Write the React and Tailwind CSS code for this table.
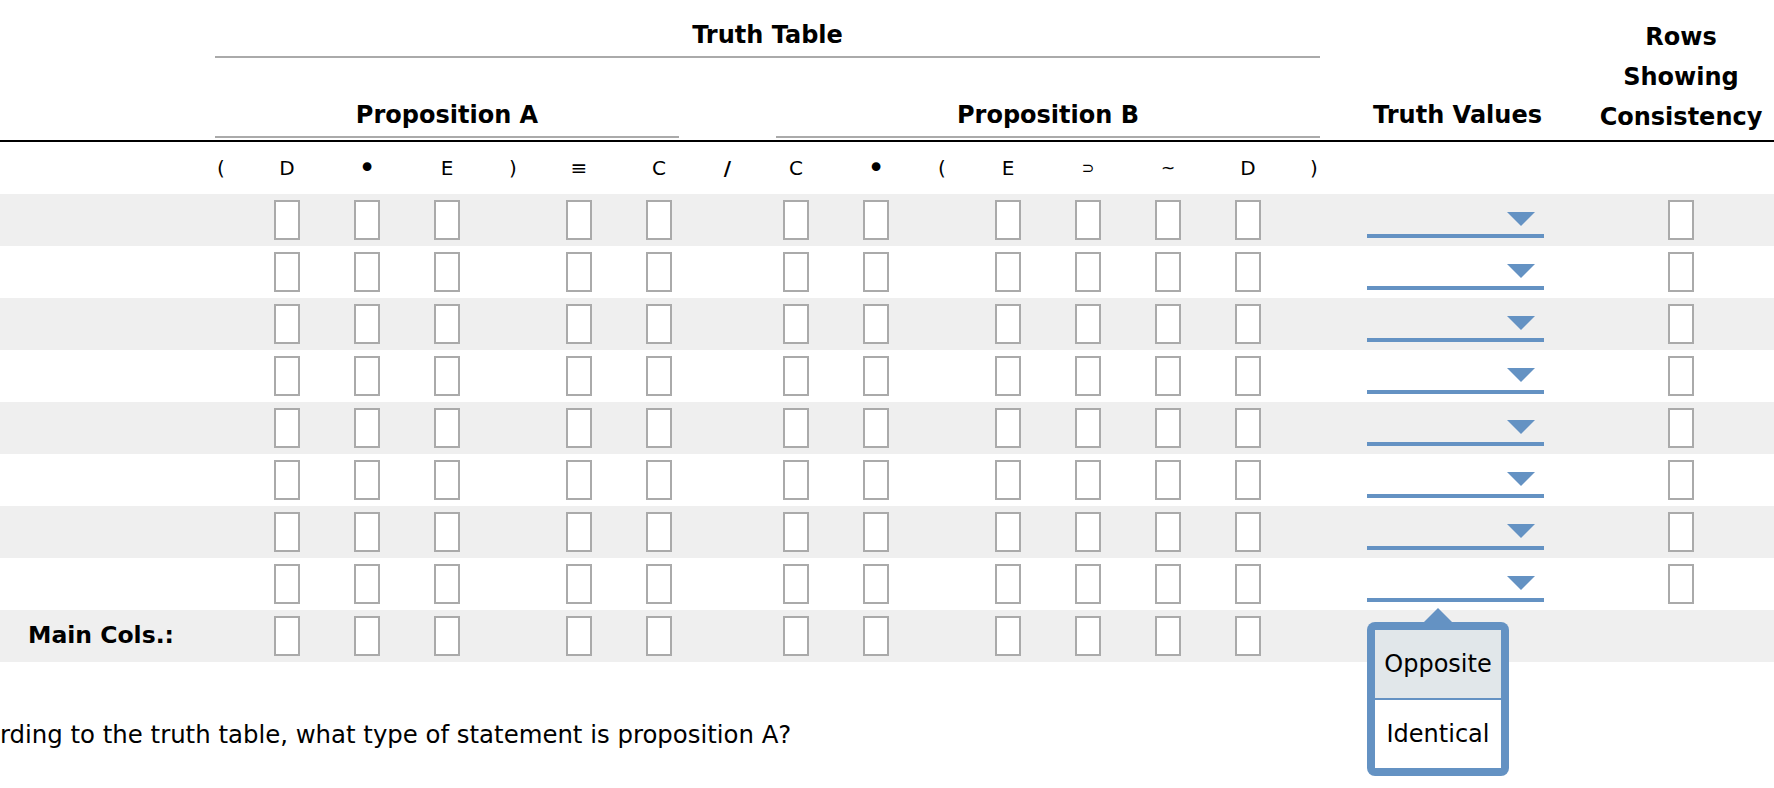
import React from "react";

const GRID =
  "grid grid-cols-[195px_52px_80px_80px_80px_52px_80px_80px_57px_80px_80px_52px_80px_80px_80px_80px_52px_235px_212px]";

const SYMBOLS = [
  { s: "(" },
  { s: "D", box: true },
  { s: "•", box: true, size: "text-[30px]" },
  { s: "E", box: true },
  { s: ")" },
  { s: "≡", box: true },
  { s: "C", box: true },
  { s: "/", bold: true },
  { s: "C", box: true },
  { s: "•", box: true, size: "text-[30px]" },
  { s: "(" },
  { s: "E", box: true },
  { s: "⊃", box: true, size: "text-[15px]" },
  { s: "~", box: true, size: "text-[17px]" },
  { s: "D", box: true },
  { s: ")" },
];

const Box = () => <div className="w-[26px] h-[40px] border-2 border-[#aaa] bg-white" />;

const Popup = () => (
  <div className="absolute left-[27px] top-[50px] z-10 flex flex-col items-center w-[142px]">
    <svg width="28" height="14" viewBox="0 0 28 14" className="block">
      <polygon points="0,14 14,0 28,14" fill="#6492c3" />
    </svg>
    <div className="w-[142px] rounded-[8px] bg-[#6492c3] p-[8px] flex flex-col gap-[2px]">
      <div className="h-[68px] bg-[#e1e7ea] flex items-center justify-center text-[24px] text-black">
        Opposite
      </div>
      <div className="h-[68px] bg-white flex items-center justify-center text-[24px] text-black">
        Identical
      </div>
    </div>
  </div>
);

const Dropdown = ({ open }) => (
  <div className="relative h-full">
    <div className="ml-[27px] w-[177px] pt-[18px] flex flex-col items-end">
      <svg width="28" height="14" viewBox="0 0 28 14" className="block mr-[9px]">
        <polygon points="0,0 28,0 14,14" fill="#6492c3" />
      </svg>
      <div className="mt-[8px] h-[4px] w-full bg-[#6492c3]" />
    </div>
    {open && <Popup />}
  </div>
);

const DataRow = ({ index, main }) => (
  <div className={`${GRID} h-[52px] items-center ${index % 2 === 0 ? "bg-[#efefef]" : "bg-white"}`}>
    <div className="pl-[28px] font-bold text-[23.5px] text-black">{main ? "Main Cols.:" : ""}</div>
    {SYMBOLS.map((col, i) => (
      <div key={i} className="flex justify-center">
        {col.box && <Box />}
      </div>
    ))}
    {main ? <div /> : <Dropdown open={index === 7} />}
    <div className="flex justify-center">{!main && <Box />}</div>
  </div>
);

export default function App() {
  return (
    <div className="w-[1774px] h-[788px] overflow-hidden bg-white text-black font-['DejaVu_Sans',Verdana,sans-serif]">
      <div className="w-[1787px]">
        <div className={`${GRID} grid-rows-[58px_82px]`}>
          <div className="col-start-2 col-end-18 row-start-1 flex flex-col justify-end">
            <div className="text-center font-bold text-[24px] leading-[28px] mb-[7px]">Truth Table</div>
            <div className="mx-[20px] h-[2px] bg-[#aaa]" />
          </div>
          <div className="col-start-19 row-start-1 row-span-2 flex flex-col justify-end items-center pb-[3px] font-bold text-[24px] leading-[40px]">
            <div>Rows</div>
            <div>Showing</div>
            <div>Consistency</div>
          </div>
          <div className="col-start-2 col-end-9 row-start-2 flex flex-col justify-end pb-[2px]">
            <div className="text-center font-bold text-[24px] leading-[28px] mb-[7px]">Proposition A</div>
            <div className="mx-[20px] h-[2px] bg-[#aaa]" />
          </div>
          <div className="col-start-10 col-end-18 row-start-2 flex flex-col justify-end pb-[2px]">
            <div className="text-center font-bold text-[24px] leading-[28px] mb-[7px]">Proposition B</div>
            <div className="mx-[20px] h-[2px] bg-[#aaa]" />
          </div>
          <div className="col-start-18 row-start-2 flex flex-col justify-end items-center pb-[11px]">
            <div className="font-bold text-[24px] leading-[28px]">Truth Values</div>
          </div>
        </div>

        <div className="h-[2px] bg-black" />

        <div className={`${GRID} h-[52px] items-center`}>
          <div />
          {SYMBOLS.map((col, i) => (
            <div
              key={i}
              className={`flex justify-center items-center h-[24px] leading-[24px] ${col.size || "text-[20px]"} ${col.bold ? "font-bold" : ""}`}
            >
              {col.s}
            </div>
          ))}
          <div />
          <div />
        </div>

        {Array.from({ length: 8 }).map((_, i) => (
          <DataRow key={i} index={i} />
        ))}
        <DataRow index={8} main />

        <p className="mt-[58px] ml-[-58px] text-[24.4px] leading-[30px] whitespace-nowrap">
          According to the truth table, what type of statement is proposition A?
        </p>
      </div>
    </div>
  );
}
